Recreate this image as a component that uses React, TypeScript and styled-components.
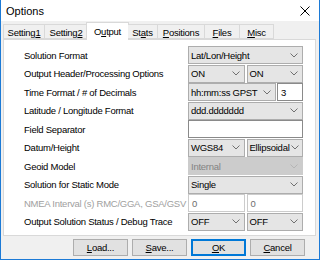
import React from "react";
import styled, { createGlobalStyle } from "styled-components";

const Global = createGlobalStyle`
  html, body { margin: 0; padding: 0; background: #ffffff; }
  * { box-sizing: border-box; }
`;

const FONT = `"Liberation Sans", Arial, sans-serif`;

const Window = styled.div`
  width: 320px;
  height: 260px;
  border: 1px solid #1c7ad6;
  border-top: none;
  background: #f0f0f0;
  display: flex;
  flex-direction: column;
  font-family: ${FONT};
  font-size: 9.5px;
  letter-spacing: -0.25px;
  color: #000;
  overflow: hidden;
`;

const TitleBar = styled.div`
  height: 21px;
  background: #ffffff;
  display: flex;
  align-items: center;
  justify-content: space-between;
  padding: 0 9px 0 5px;
  font-size: 11px;
  letter-spacing: 0;
`;

const Body = styled.div`
  flex: 1;
  display: flex;
  flex-direction: column;
  padding: 1px 3px 0 2px;
`;

const TabStrip = styled.div`
  height: 17px;
  display: flex;
  align-items: flex-end;
  position: relative;
  z-index: 1;
`;

const Tab = styled.div<{ $w: number; $active?: boolean }>`
  width: ${(p) => p.$w}px;
  height: ${(p) => (p.$active ? 18 : 15)}px;
  margin: ${(p) => (p.$active ? "0 -1px -1px -2px" : "0")};
  border: 1px solid #d9d9d9;
  border-bottom: ${(p) => (p.$active ? "none" : "1px solid #d9d9d9")};
  border-left-width: ${(p) => (p.$active ? 1 : 0)}px;
  background: ${(p) => (p.$active ? "#ffffff" : "#f0f0f0")};
  display: flex;
  align-items: center;
  justify-content: center;
  padding-top: ${(p) => (p.$active ? 0 : 1)}px;
  &:first-child { border-left-width: 1px; }
`;

const Panel = styled.div`
  height: 197px;
  border: 1px solid #d9d9d9;
  background: #ffffff;
  padding: 6px 12px 0 20px;
  display: grid;
  grid-template-columns: minmax(0, 1fr) 115px;
  grid-auto-rows: 18px;
  row-gap: 0.5px;
  align-items: center;
`;

const Label = styled.div<{ $disabled?: boolean }>`
  color: ${(p) => (p.$disabled ? "#a0a0a0" : "#000")};
  white-space: nowrap;
`;

const Controls = styled.div<{ $cols: string; $gap?: number }>`
  display: grid;
  grid-template-columns: ${(p) => p.$cols};
  column-gap: ${(p) => p.$gap ?? 2}px;
  height: 18px;
`;

const ComboBox = styled.div<{ $disabled?: boolean }>`
  height: 18px;
  border: 1px solid ${(p) => (p.$disabled ? "#cccccc" : "#adadad")};
  background: ${(p) => (p.$disabled ? "#cccccc" : "#e5e5e5")};
  color: ${(p) => (p.$disabled ? "#838383" : "#000")};
  display: flex;
  align-items: center;
  justify-content: space-between;
  padding: 0 4px 0 2px;
  overflow: hidden;
  white-space: nowrap;
  gap: 1px;
`;

const Edit = styled.div<{ $disabled?: boolean }>`
  height: 18px;
  border: 1px solid ${(p) => (p.$disabled ? "#cccccc" : "#8a8a8a")};
  background: #ffffff;
  color: ${(p) => (p.$disabled ? "#6d6d6d" : "#000")};
  display: flex;
  align-items: center;
  padding: 0 3px;
`;

const Footer = styled.div`
  display: flex;
  justify-content: flex-end;
  gap: 4px;
  padding: 3px 11px 0 0;
`;

const Button = styled.div<{ $default?: boolean }>`
  width: 55px;
  height: 17px;
  border: 1px solid ${(p) => (p.$default ? "#0078d7" : "#adadad")};
  box-shadow: ${(p) => (p.$default ? "inset 0 0 0 1px #0078d7" : "none")};
  background: #e1e1e1;
  display: flex;
  align-items: center;
  justify-content: center;
`;

const U = styled.span`
  text-decoration: underline;
`;

const Chevron = ({ color = "#555" }: { color?: string }) => (
  <svg width="8" height="5" viewBox="0 0 8 5" style={{ flex: "none" }}>
    <polyline points="0.5,0.5 4,4 7.5,0.5" fill="none" stroke={color} strokeWidth="1" />
  </svg>
);

const Combo = ({ text, disabled }: { text: string; disabled?: boolean }) => (
  <ComboBox $disabled={disabled}>
    <span>{text}</span>
    <Chevron color={disabled ? "#b5b5b5" : "#707070"} />
  </ComboBox>
);

const CloseIcon = () => (
  <svg width="10" height="10" viewBox="0 0 10 10">
    <path d="M0.5 0.5 L9.5 9.5 M9.5 0.5 L0.5 9.5" stroke="#000" strokeWidth="1" />
  </svg>
);

const tabs: { node: React.ReactNode; w: number; active?: boolean }[] = [
  { node: <>Setting<U>1</U></>, w: 42 },
  { node: <>Setting<U>2</U></>, w: 43 },
  { node: <>O<U>u</U>tput</>, w: 43, active: true },
  { node: <>St<U>a</U>ts</>, w: 30 },
  { node: <><U>P</U>ositions</>, w: 47 },
  { node: <><U>F</U>iles</>, w: 35 },
  { node: <><U>M</U>isc</>, w: 34 },
];

export default function App() {
  return (
    <>
      <Global />
      <Window>
        <TitleBar>
          <span>Options</span>
          <CloseIcon />
        </TitleBar>
        <Body>
          <TabStrip>
            {tabs.map((t, i) => (
              <Tab key={i} $w={t.w} $active={t.active}>
                {t.node}
              </Tab>
            ))}
          </TabStrip>
          <Panel>
            <Label>Solution Format</Label>
            <Combo text="Lat/Lon/Height" />

            <Label>Output Header/Processing Options</Label>
            <Controls $cols="1fr 1fr">
              <Combo text="ON" />
              <Combo text="ON" />
            </Controls>

            <Label>Time Format / # of Decimals</Label>
            <Controls $cols="1fr 26px" $gap={1}>
              <Combo text="hh:mm:ss GPST" />
              <Edit>3</Edit>
            </Controls>

            <Label>Latitude / Longitude Format</Label>
            <Combo text="ddd.ddddddd" />

            <Label>Field Separator</Label>
            <Edit />

            <Label>Datum/Height</Label>
            <Controls $cols="1fr 1fr">
              <Combo text="WGS84" />
              <Combo text="Ellipsoidal" />
            </Controls>

            <Label>Geoid Model</Label>
            <Combo text="Internal" disabled />

            <Label>Solution for Static Mode</Label>
            <Combo text="Single" />

            <Label $disabled>NMEA Interval (s) RMC/GGA, GSA/GSV</Label>
            <Controls $cols="1fr 1fr">
              <Edit $disabled>0</Edit>
              <Edit $disabled>0</Edit>
            </Controls>

            <Label>Output Solution Status / Debug Trace</Label>
            <Controls $cols="1fr 1fr">
              <Combo text="OFF" />
              <Combo text="OFF" />
            </Controls>
          </Panel>
          <Footer>
            <Button><span><U>L</U>oad...</span></Button>
            <Button><span><U>S</U>ave...</span></Button>
            <Button $default><span><U>O</U>K</span></Button>
            <Button><span><U>C</U>ancel</span></Button>
          </Footer>
        </Body>
      </Window>
    </>
  );
}
